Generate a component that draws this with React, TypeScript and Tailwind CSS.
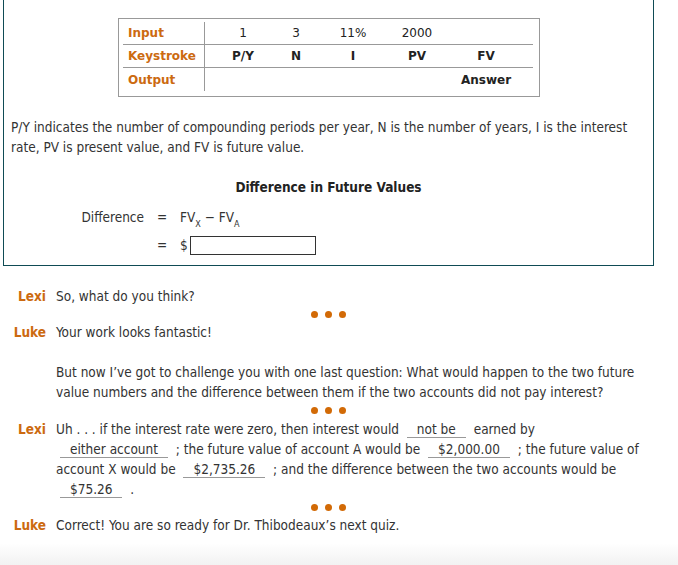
import React from "react";

const body = { fontFamily: "'DejaVu Sans Condensed', 'DejaVu Sans', sans-serif" };
const verd = { fontFamily: "'DejaVu Sans', Verdana, sans-serif" };

function Dots() {
  return (
    <div className="w-[656px] h-[16px] flex items-center justify-center gap-[7px]">
      <span className="w-[7px] h-[7px] rounded-full bg-[#d26a06]" />
      <span className="w-[7px] h-[7px] rounded-full bg-[#d26a06]" />
      <span className="w-[7px] h-[7px] rounded-full bg-[#d26a06]" />
    </div>
  );
}

function Blank({ children }: { children: React.ReactNode }) {
  return (
    <span className="inline-block mx-[4px] px-[10px] border-b border-[#999] leading-[16px]">{children}</span>
  );
}

function Speaker({ name, children }: { name: string; children: React.ReactNode }) {
  return (
    <div className="flex">
      <div className="w-[46px] text-right font-bold text-[#cc6a10] shrink-0">{name}</div>
      <div className="pl-[10px] w-[600px]">{children}</div>
    </div>
  );
}

export default function App() {
  const cols = ["1", "3", "11%", "2000", ""];
  const keys = ["P/Y", "N", "I", "PV", "FV"];
  const outs = ["", "", "", "", "Answer"];
  const labelCls = "h-[23px] flex items-center pl-[5px] font-bold text-[#cc6a10] border-r border-[#999]";
  const cell = "h-[23px] flex items-center justify-center";
  return (
    <div className="w-[678px] h-[565px] bg-white text-[13.5px] leading-[20px] text-[#333] overflow-hidden flex flex-col" style={body}>
      <div className="ml-[3px] w-[651px] border-x border-b border-[#0f4b55] pb-[10px]">
        <div className="mt-[18px] ml-[114px] w-[422px] h-[79px] border border-[#999] pt-[3px] px-[4px] text-[12px]" style={verd}>
          <div className="grid grid-cols-[82px_76px_30px_84px_44px_94px] text-[#222]">
            <div className={labelCls + " border-b"}>Input</div>
            {cols.map((c, i) => (
              <div key={"a" + i} className={cell + " border-b border-[#999]"}>{c}</div>
            ))}
            <div className={labelCls + " border-b"}>Keystroke</div>
            {keys.map((c, i) => (
              <div key={"b" + i} className={cell + " border-b border-[#999] font-bold"}>{c}</div>
            ))}
            <div className={labelCls}>Output</div>
            {outs.map((c, i) => (
              <div key={"c" + i} className={cell + " font-bold"}>{c}</div>
            ))}
          </div>
        </div>
        <p className="mt-[20px] pl-[7px] pr-[10px]">
          P/Y indicates the number of compounding periods per year, N is the number of years, I is the interest rate, PV is present value, and FV is future value.
        </p>
        <div className="mt-[20px] text-center font-bold text-[#222]">Difference in Future Values</div>
        <div className="mt-[10px] flex items-center">
          <div className="w-[140px] text-right">Difference</div>
          <div className="w-[36px] text-center">=</div>
          <div>
            FV<sub className="text-[9px] align-[-3px]">X</sub> − FV<sub className="text-[9px] align-[-3px]">A</sub>
          </div>
        </div>
        <div className="mt-[8px] flex items-center">
          <div className="w-[140px]" />
          <div className="w-[36px] text-center">=</div>
          <div className="w-[10px]">$</div>
          <div className="w-[126px] h-[19px] border border-[#333] bg-white" />
        </div>
      </div>

      <div className="mt-[20px] ml-[0px]">
        <Speaker name="Lexi">So, what do you think?</Speaker>
        <Dots />
        <Speaker name="Luke">Your work looks fantastic!</Speaker>
        <div className="mt-[20px] ml-[56px] w-[590px]">
          But now I’ve got to challenge you with one last question: What would happen to the two future value numbers and the difference between them if the two accounts did not pay interest?
        </div>
        <Dots />
        <div className="mt-[1px]">
          <Speaker name="Lexi">
            Uh . . . if the interest rate were zero, then interest would <Blank>not be</Blank> earned by <Blank>either account</Blank> ; the future value of account A would be <Blank>$2,000.00</Blank> ; the future value of account X would be <Blank>$2,735.26</Blank> ; and the difference between the two accounts would be <Blank>$75.26</Blank> .
          </Speaker>
        </div>
        <Dots />
        <Speaker name="Luke">Correct! You are so ready for Dr. Thibodeaux’s next quiz.</Speaker>
      </div>
      <div className="flex-1 mt-[8px] bg-gradient-to-b from-white to-[#f2f2f2]" />
    </div>
  );
}
